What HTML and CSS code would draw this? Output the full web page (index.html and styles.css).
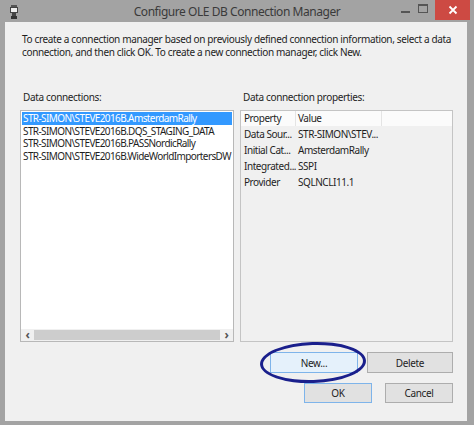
FILE: index.html
```html
<!DOCTYPE html>
<html>
<head>
<meta charset="utf-8">
<link rel="stylesheet" href="styles.css">
</head>
<body>
<div class="window">
  <div class="titlebar">
    <div class="tb-left">
      <svg class="appicon" width="10" height="16" viewBox="0 0 10 16">
        <rect x="2" y="1" width="6" height="2" fill="#555"/>
        <rect x="1.5" y="3.5" width="7" height="5" fill="#eee" stroke="#444" stroke-width="1"/>
        <rect x="3" y="9" width="4" height="3" fill="#444"/>
        <rect x="2" y="12" width="6" height="3" fill="#333"/>
      </svg>
    </div>
    <div class="title">Configure OLE DB Connection Manager</div>
    <div class="controls">
      <span class="ctl-min"></span>
      <span class="ctl-max"></span>
      <span class="ctl-close">
        <svg width="10" height="10" viewBox="0 0 10 10"><path d="M1.5 1.5 L8.5 8.5 M8.5 1.5 L1.5 8.5" stroke="#fff" stroke-width="1.8"/></svg>
      </span>
    </div>
  </div>
  <div class="client">
    <p class="intro">To create a connection manager based on previously defined connection information, select a data connection, and then click OK. To create a new connection manager, click New.</p>
    <div class="panels">
      <div class="panel">
        <div class="plabel">Data connections:</div>
        <div class="listbox">
          <div class="items">
            <div class="item sel">STR-SIMON\STEVE2016B.AmsterdamRally</div>
            <div class="item">STR-SIMON\STEVE2016B.DQS_STAGING_DATA</div>
            <div class="item">STR-SIMON\STEVE2016B.PASSNordicRally</div>
            <div class="item">STR-SIMON\STEVE2016B.WideWorldImportersDW</div>
          </div>
          <div class="hscroll">
            <span class="arrow">&#8249;</span>
            <span class="thumb"></span>
            <span class="arrow">&#8250;</span>
          </div>
        </div>
      </div>
      <div class="panel">
        <div class="plabel">Data connection properties:</div>
        <div class="propbox">
          <div class="prow head">
            <span class="c1">Property</span><span class="c2">Value</span><span class="c3"></span>
          </div>
          <div class="prow"><span class="c1">Data Sour...</span><span class="c2">STR-SIMON\STEV...</span></div>
          <div class="prow"><span class="c1">Initial Cat...</span><span class="c2">AmsterdamRally</span></div>
          <div class="prow"><span class="c1">Integrated...</span><span class="c2">SSPI</span></div>
          <div class="prow"><span class="c1">Provider</span><span class="c2">SQLNCLI11.1</span></div>
        </div>
      </div>
    </div>
    <div class="btnrow row1">
      <button class="btn focus new">New...</button>
      <button class="btn del">Delete</button>
    </div>
    <div class="btnrow row2">
      <button class="btn ok">OK</button>
      <button class="btn cancel">Cancel</button>
    </div>
  </div>
  <div class="annotation"></div>
</div>
</body>
</html>
```
FILE: styles.css
```css
html, body {
  margin: 0;
  padding: 0;
  background: #ffffff;
}
.window {
  position: relative;
  width: 474px;
  height: 425px;
  box-sizing: border-box;
  background: #a3a3a3;
  padding: 0 7px 4px 5px;
  display: flex;
  flex-direction: column;
  font-family: "Noto Sans", "Open Sans", sans-serif;
  color: #1e1e1e;
  overflow: hidden;
}
.titlebar {
  height: 22px;
  display: grid;
  grid-template-columns: 1fr auto 1fr;
  align-items: start;
  margin-left: -5px;
  margin-right: -7px;
}
.tb-left {
  padding-left: 9px;
  padding-top: 4px;
}
.appicon {
  display: block;
}
.title {
  font-size: 12px;
  line-height: 23px;
  color: #3a3a3a;
  letter-spacing: -0.45px;
}
.controls {
  display: flex;
  justify-content: flex-end;
  align-items: flex-start;
  height: 20px;
  padding-right: 4px;
}
.ctl-min {
  width: 9px;
  height: 2px;
  background: #555;
  margin-top: 11px;
  margin-right: 8px;
}
.ctl-max {
  width: 8px;
  height: 6px;
  border: 1px solid #555;
  border-top-width: 2px;
  margin-top: 4px;
  margin-right: 7px;
}
.ctl-close {
  width: 35px;
  height: 20px;
  background: #cd4a43;
  display: flex;
  align-items: center;
  justify-content: center;
}
.client {
  flex: 1;
  background: #f0f0f0;
  padding: 11px 14px 0 15px;
  font-size: 10px;
  letter-spacing: -0.35px;
}
.intro {
  margin: 0 0 0 2px;
  line-height: 13px;
  color: #1e1e1e;
}
.panels {
  display: grid;
  grid-template-columns: 214px 213px;
  gap: 6px;
  margin-top: 32px;
}
.plabel {
  line-height: 13px;
  padding-left: 3px;
  margin-bottom: 6px;
}
.listbox {
  height: 232px;
  box-sizing: border-box;
  border: 1px solid #b8b8b8;
  background: #ffffff;
  display: flex;
  flex-direction: column;
  padding: 1px 1px 0 1px;
}
.items {
  flex: 1;
}
.item {
  height: 12.7px;
  line-height: 12.7px;
  padding-left: 1px;
  white-space: nowrap;
  overflow: hidden;
  letter-spacing: -0.6px;
}
.item.sel {
  background: #3399ff;
  color: #ffffff;
}
.hscroll {
  height: 12px;
  display: flex;
  align-items: center;
  background: #f0f0f0;
  margin: 0 -1px;
}
.arrow {
  width: 13px;
  text-align: center;
  font-size: 12px;
  font-weight: bold;
  color: #555;
  line-height: 12px;
}
.thumb {
  flex: 1;
  height: 10px;
  background: #cdcdcd;
}
.propbox {
  height: 232px;
  box-sizing: border-box;
  border: 1px solid #c4c4c4;
  background: #f0f0f0;
}
.prow {
  display: flex;
  height: 16px;
  line-height: 16px;
  white-space: nowrap;
}
.prow.head {
  height: 15px;
  line-height: 15px;
  background: #fbfbfb;
}
.c1 {
  width: 55px;
  padding-left: 3px;
  box-sizing: border-box;
  overflow: hidden;
  letter-spacing: -0.45px;
}
.c2 {
  width: 86px;
  padding-left: 2px;
  box-sizing: border-box;
  overflow: hidden;
  letter-spacing: -0.45px;
}
.head .c1, .head .c2 {
  border-right: 1px solid #e4e4e4;
}
.c3 {
  flex: 1;
}
.btnrow {
  display: flex;
  justify-content: flex-end;
}
.row1 {
  margin-top: 10px;
  gap: 9px;
}
.row2 {
  margin-top: 10px;
  gap: 13px;
}
.btn {
  font-family: "Noto Sans", "Open Sans", sans-serif;
  font-size: 10px;
  letter-spacing: -0.35px;
  color: #1e1e1e;
  background: #e1e1e1;
  border: 1px solid #adadad;
  padding: 0;
  margin: 0;
}
.new { width: 88px; height: 21px; }
.del { width: 86px; height: 21px; }
.ok { width: 68px; height: 20px; }
.cancel { width: 68px; height: 20px; }
.btn.focus {
  background: #e5f1fb;
  border-color: #7eb4ea;
}
.ok {
  border-color: #7eb4ea;
}
.annotation {
  position: absolute;
  left: 260px;
  top: 342px;
  width: 106px;
  height: 41px;
  box-sizing: border-box;
  border: 3px solid #1a1f8c;
  border-radius: 50%;
  transform: rotate(-2deg);
}
```
